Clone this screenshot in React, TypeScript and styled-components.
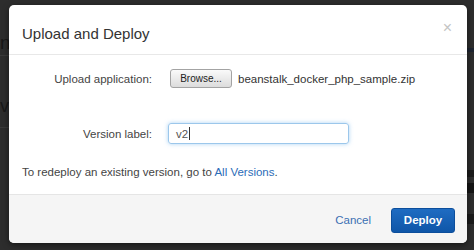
import React from "react";
import styled, { createGlobalStyle } from "styled-components";

const Global = createGlobalStyle`
  html, body { margin: 0; padding: 0; }
  body {
    width: 474px;
    height: 250px;
    overflow: hidden;
    background: #2d2d2d;
    font-family: "Liberation Sans", Arial, sans-serif;
  }
`;

const Page = styled.div`
  position: relative;
  width: 474px;
  height: 250px;
  background: #2d2d2d;
  overflow: hidden;
`;

const BackText = styled.div<{ $top: number; $left: number; $size: number }>`
  position: absolute;
  top: ${(p) => p.$top}px;
  left: ${(p) => p.$left}px;
  font-size: ${(p) => p.$size}px;
  color: #181818;
  white-space: nowrap;
`;

const BackLine = styled.div<{ $top: number; $left: number; $width: number; $height: number; $color: string }>`
  position: absolute;
  top: ${(p) => p.$top}px;
  left: ${(p) => p.$left}px;
  width: ${(p) => p.$width}px;
  height: ${(p) => p.$height}px;
  background: ${(p) => p.$color};
`;

const Modal = styled.div`
  position: absolute;
  left: 9px;
  top: 5px;
  width: 458px;
  height: 238px;
  background: #fff;
  border-radius: 5px;
  overflow: hidden;
  display: flex;
  flex-direction: column;
  box-shadow: 0 2px 6px rgba(0, 0, 0, 0.5);
`;

const Header = styled.div`
  height: 50px;
  display: flex;
  align-items: center;
  justify-content: space-between;
  padding: 0 15px 0 13px;
  border-bottom: 1px solid #e8e8e8;
  box-sizing: border-box;
  flex: none;
`;

const Title = styled.h3`
  margin: 0;
  padding-top: 7px;
  font-size: 15px;
  font-weight: normal;
  color: #333;
`;

const Close = styled.span`
  font-size: 16px;
  color: #c4c4c4;
  line-height: 1;
  margin-top: -4px;
`;

const Body = styled.div`
  flex: 1;
  padding: 14px 13px 0 13px;
  display: flex;
  flex-direction: column;
`;

const FormRow = styled.div<{ $mt?: number }>`
  display: flex;
  align-items: center;
  margin-top: ${(p) => p.$mt ?? 0}px;
  font-size: 11.5px;
  color: #444;
`;

const Label = styled.label`
  flex: none;
  width: 130px;
  text-align: right;
`;

const Controls = styled.div<{ $shift: number }>`
  display: flex;
  align-items: center;
  gap: 6px;
  margin-left: ${(p) => p.$shift}px;
`;

const BrowseButton = styled.button`
  height: 19px;
  width: 62px;
  padding: 0;
  font-family: inherit;
  font-size: 10px;
  color: #222;
  background: linear-gradient(#fafafa, #dcdcdc);
  border: 1px solid #a3a3a3;
  border-radius: 3px;
  box-sizing: border-box;
`;

const FileName = styled.span`
  color: #333;
`;

const Field = styled.div`
  width: 181px;
  height: 21px;
  box-sizing: border-box;
  border: 1px solid #9cc7eb;
  border-radius: 3px;
  box-shadow: 0 0 4px rgba(102, 175, 233, 0.55);
  padding: 0 7px;
  display: flex;
  align-items: center;
  color: #555;
  font-size: 11.5px;
`;

const Caret = styled.span`
  display: inline-block;
  width: 1px;
  height: 13px;
  background: #333;
  margin-left: 1px;
`;

const Note = styled.p`
  margin: 22px 0 0 0;
  font-size: 11.5px;
  color: #444;
`;

const Link = styled.a`
  color: #2b6cb8;
  text-decoration: none;
`;

const Footer = styled.div`
  height: 49px;
  flex: none;
  box-sizing: border-box;
  background: #f5f5f5;
  border-top: 1px solid #e5e5e5;
  display: flex;
  align-items: center;
  justify-content: flex-end;
  gap: 20px;
  padding: 0 12px 0 0;
`;

const CancelLink = styled.a`
  font-size: 11.5px;
  color: #3b6fb3;
  margin-top: 2px;
`;

const DeployButton = styled.button`
  width: 64px;
  height: 25px;
  margin-top: 2px;
  font-family: inherit;
  font-size: 11.5px;
  font-weight: bold;
  color: #fff;
  background: linear-gradient(#1f6cc2, #0f56a8);
  border: 1px solid #0c4e9c;
  border-radius: 3px;
  padding: 0;
`;

export default function App() {
  return (
    <>
      <Global />
      <Page>
        <BackText $top={32} $left={0} $size={19}>n</BackText>
        <BackLine $top={55} $left={0} $width={9} $height={1} $color="#3a3a3a" />
        <BackText $top={96} $left={0} $size={18}>v</BackText>
        <BackLine $top={127} $left={0} $width={9} $height={1} $color="#3a3a3a" />
        <BackLine $top={48} $left={467} $width={7} $height={4} $color="#1e2430" />
        <BackLine $top={170} $left={467} $width={7} $height={7} $color="#1b1b1b" />
        <BackLine $top={183} $left={467} $width={7} $height={10} $color="#151515" />
        <BackLine $top={214} $left={467} $width={7} $height={10} $color="#1b1b1b" />
        <Modal>
          <Header>
            <Title>Upload and Deploy</Title>
            <Close>×</Close>
          </Header>
          <Body>
            <FormRow>
              <Label>Upload application:</Label>
              <Controls $shift={18}>
                <BrowseButton>Browse...</BrowseButton>
                <FileName>beanstalk_docker_php_sample.zip</FileName>
              </Controls>
            </FormRow>
            <FormRow $mt={35}>
              <Label>Version label:</Label>
              <Controls $shift={16}>
                <Field>
                  v2
                  <Caret />
                </Field>
              </Controls>
            </FormRow>
            <Note>
              To redeploy an existing version, go to <Link>All Versions</Link>.
            </Note>
          </Body>
          <Footer>
            <CancelLink>Cancel</CancelLink>
            <DeployButton>Deploy</DeployButton>
          </Footer>
        </Modal>
      </Page>
    </>
  );
}
